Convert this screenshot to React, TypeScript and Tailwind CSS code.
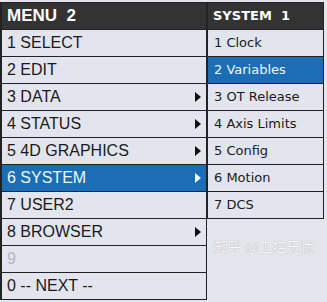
import React from "react";

type Item = { label: string; sub?: boolean; active?: boolean; disabled?: boolean };

const mainItems: Item[] = [
  { label: "1 SELECT" },
  { label: "2 EDIT" },
  { label: "3 DATA", sub: true },
  { label: "4 STATUS", sub: true },
  { label: "5 4D GRAPHICS", sub: true },
  { label: "6 SYSTEM", sub: true, active: true },
  { label: "7 USER2" },
  { label: "8 BROWSER", sub: true },
  { label: "9", disabled: true },
  { label: "0 -- NEXT --" },
];

const subItems: Item[] = [
  { label: "1 Clock" },
  { label: "2 Variables", active: true },
  { label: "3 OT Release" },
  { label: "4 Axis Limits" },
  { label: "5 Config" },
  { label: "6 Motion" },
  { label: "7 DCS" },
];

const Arrow = ({ light }: { light?: boolean }) => (
  <svg width="6" height="10" viewBox="0 0 6 10" className="shrink-0">
    <path d="M0 0 L6 5 L0 10 Z" fill={light ? "#f2f8ff" : "#111"} />
  </svg>
);

const App = () => {
  return (
    <div className="flex h-[302px] w-[327px] items-start bg-[#e4e6ee] pt-[2px]">
      <div className="flex w-[207px] flex-col border border-l-2 border-[#222] font-['Liberation_Sans',Arial,sans-serif]">
        <div className="flex h-[26px] items-center bg-[#333333] px-[5px] text-[17px] font-bold text-white">
          MENU&nbsp;&nbsp;2
        </div>
        {mainItems.map((it) => (
          <div
            key={it.label}
            className={`flex h-[27px] items-center justify-between border-t border-[#222] pl-[5px] pr-[5px] text-[16px] ${
              it.active ? "bg-[#1b6db4] text-[#eef7ff]" : "bg-[#e2e5ee] text-[#1a1a1a]"
            } ${it.disabled ? "text-[#b4b6bc]" : ""}`}
          >
            <span>{it.label}</span>
            {it.sub && <Arrow light={it.active} />}
          </div>
        ))}
      </div>
      <div className="flex flex-col">
        <div className="flex w-[117px] flex-col border border-[#222] font-['DejaVu_Sans',Verdana,sans-serif]">
          <div className="flex h-[26px] items-center bg-[#333333] px-[5px] text-[13px] font-bold text-white">
            SYSTEM&nbsp;&nbsp;1
          </div>
          {subItems.map((it) => (
            <div
              key={it.label}
              className={`flex h-[27px] items-center border-t border-[#222] px-[6px] text-[13px] ${
                it.active ? "bg-[#1b6db4] text-[#eef7ff]" : "bg-[#e2e5ee] text-[#1a1a1a]"
              }`}
            >
              {it.label}
            </div>
          ))}
        </div>
        <div className="mt-[17px] whitespace-nowrap pl-[7px] font-['Noto_Sans_CJK_SC',sans-serif] text-[14px] leading-[20px] text-[#f7f7f9] [text-shadow:0_0_1px_#8e9098]">
          知乎 @工控无忧
        </div>
      </div>
    </div>
  );
};

export default App;
